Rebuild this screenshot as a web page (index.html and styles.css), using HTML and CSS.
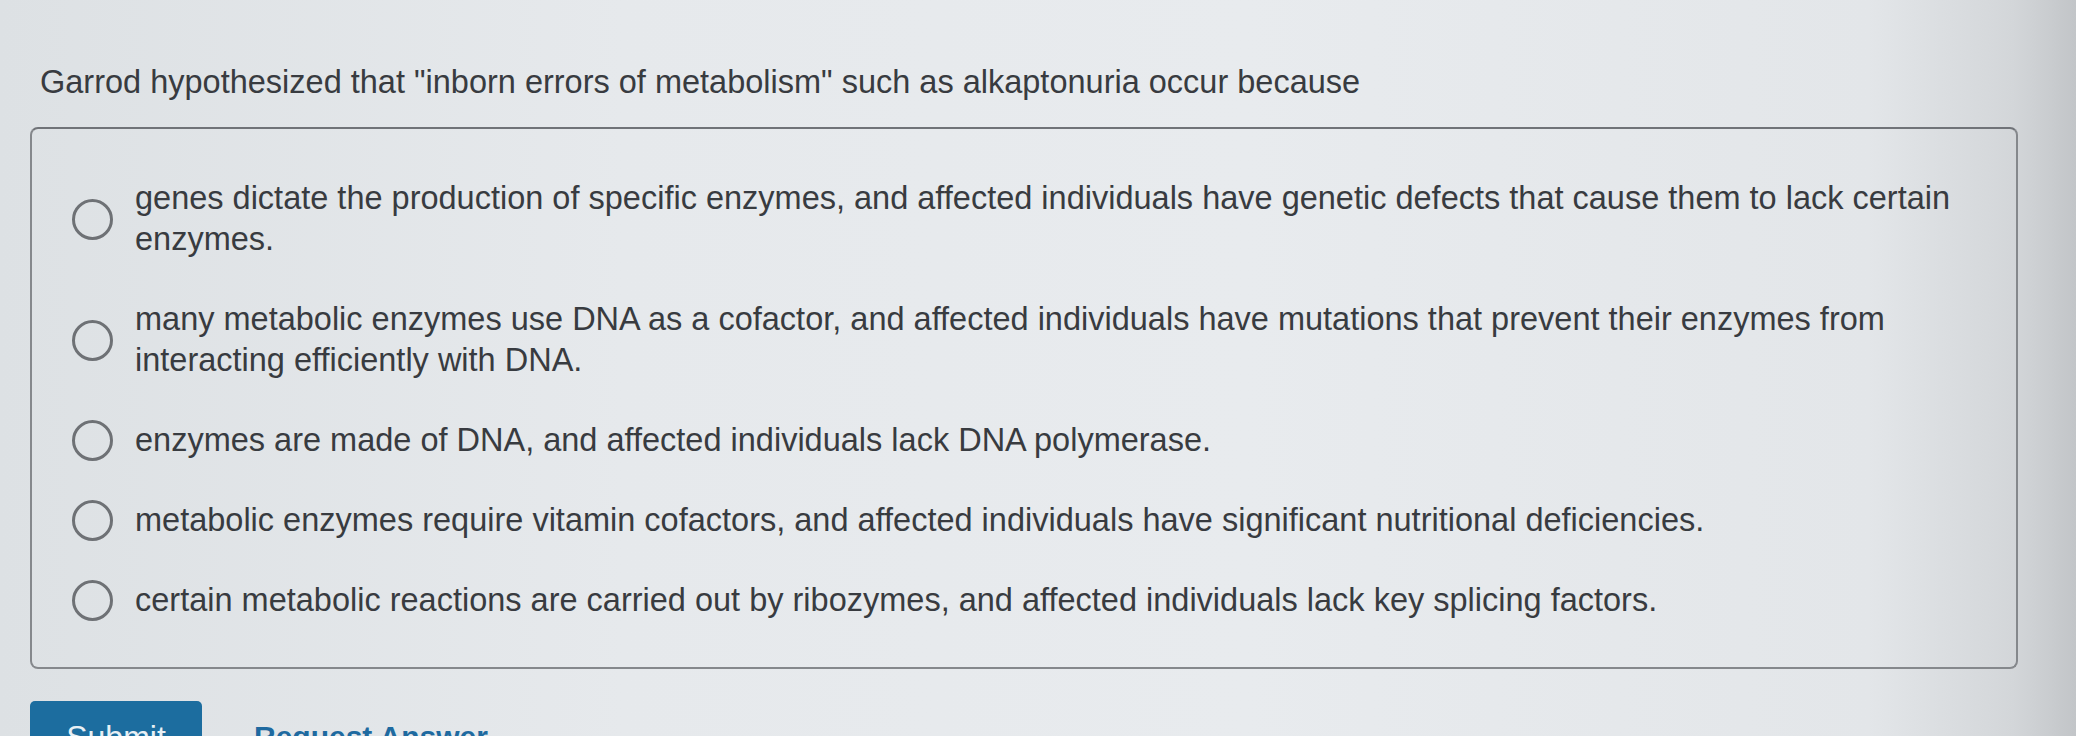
FILE: index.html
```html
<!DOCTYPE html>
<html lang="en">
<head>
<meta charset="utf-8">
<title>Question</title>
<link rel="stylesheet" href="styles.css">
</head>
<body>
<main class="page">
  <p class="question">Garrod hypothesized that "inborn errors of metabolism" such as alkaptonuria occur because</p>
  <div class="choices">
    <label class="choice"><span class="radio"></span><span class="text">genes dictate the production of specific enzymes, and affected individuals have genetic defects that cause them to lack certain enzymes.</span></label>
    <label class="choice"><span class="radio"></span><span class="text">many metabolic enzymes use DNA as a cofactor, and affected individuals have mutations that prevent their enzymes from interacting efficiently with DNA.</span></label>
    <label class="choice"><span class="radio"></span><span class="text">enzymes are made of DNA, and affected individuals lack DNA polymerase.</span></label>
    <label class="choice"><span class="radio"></span><span class="text">metabolic enzymes require vitamin cofactors, and affected individuals have significant nutritional deficiencies.</span></label>
    <label class="choice"><span class="radio"></span><span class="text">certain metabolic reactions are carried out by ribozymes, and affected individuals lack key splicing factors.</span></label>
  </div>
  <div class="actions">
    <button class="submit">Submit</button>
    <span class="request">Request Answer</span>
  </div>
</main>
</body>
</html>
```

FILE: styles.css
```css
html, body {
  margin: 0;
  padding: 0;
  height: 100%;
  overflow: hidden;
}
body {
  background: linear-gradient(90deg, #dde1e4 0%, #e6e9ec 30%, #e8ebee 60%, #e3e6e9 90%, #d3d6d9 97%, #c2c5c8 100%);
  font-family: "Liberation Sans", Arial, sans-serif;
  color: #383b40;
}
.page {
  padding: 62px 0 0 30px;
  width: 1988px;
}
.question {
  margin: 0 0 24px 10px;
  font-size: 32.5px;
  line-height: 41px;
}
.choices {
  border: 2px solid #85888c;
  border-top-color: #707378;
  border-radius: 8px;
  padding: 49px 4px 46px 40px;
  display: flex;
  flex-direction: column;
  gap: 39px;
}
.choice {
  display: flex;
  align-items: center;
  gap: 22px;
  font-size: 32.5px;
  line-height: 41px;
}
.radio {
  flex: none;
  width: 35px;
  height: 35px;
  border: 3px solid #6e7175;
  border-radius: 50%;
}
.text {
  flex: 1;
  max-width: 1880px;
}
.actions {
  margin-top: 32px;
  display: flex;
  align-items: flex-start;
  gap: 52px;
}
.submit {
  width: 172px;
  height: 60px;
  border: none;
  border-radius: 5px;
  background: #1c6d9f;
  color: #e8f0f5;
  font-family: "Liberation Sans", Arial, sans-serif;
  font-size: 32px;
  padding: 12px 0 0 0;
  text-align: center;
}
.request {
  color: #1e6aa0;
  font-size: 30px;
  font-weight: bold;
  padding-top: 19px;
}
```
